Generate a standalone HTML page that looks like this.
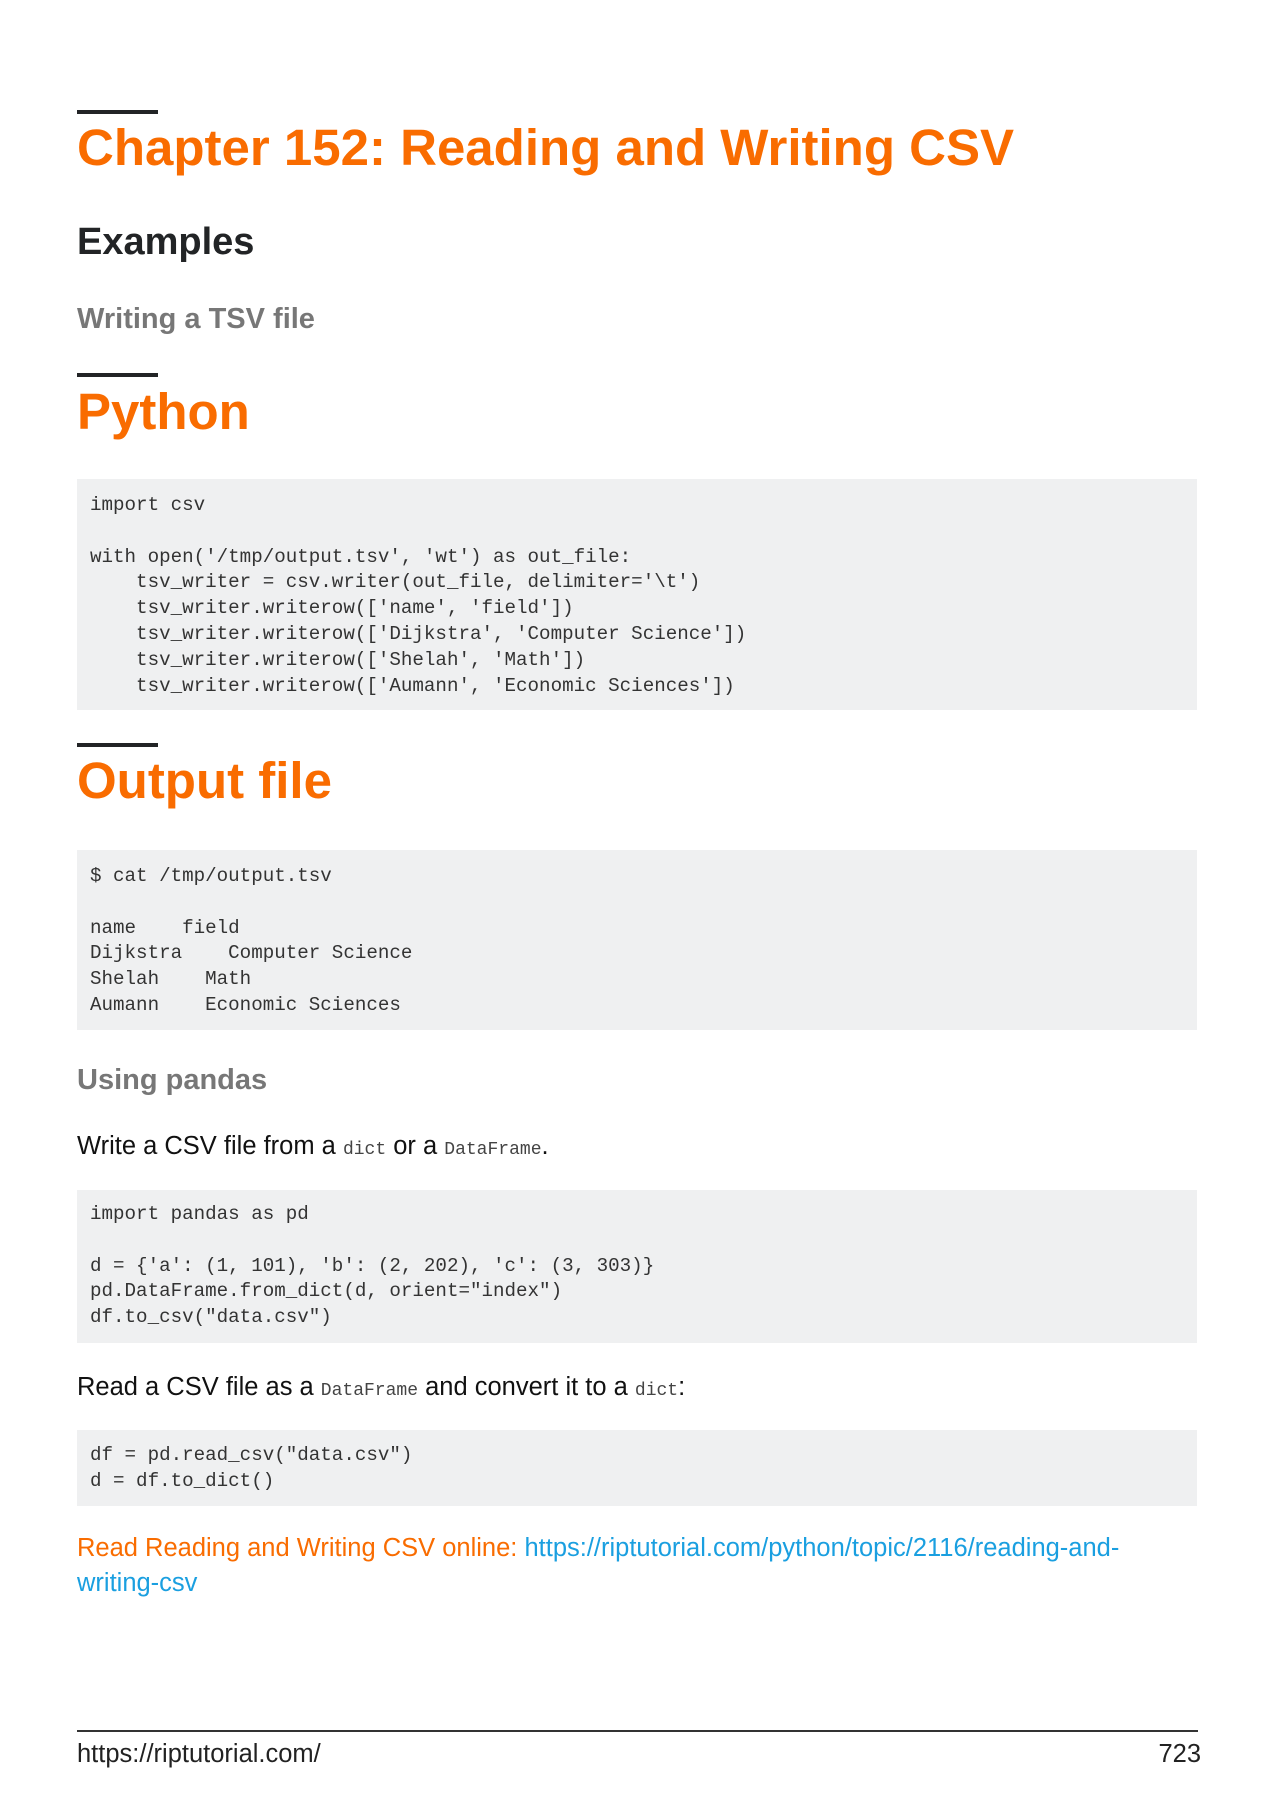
<!DOCTYPE html>
<html><head><meta charset="utf-8"><style>
*{margin:0;padding:0}
body{width:1272px;height:1800px;background:#fff;position:relative;font-family:"Liberation Sans",Arial,sans-serif;overflow:hidden}
.a{position:absolute;white-space:pre}
.bar{position:absolute;left:77px;width:81px;height:4px;background:#222426}
.h1{left:77px;color:#f96c00;font-weight:bold;font-size:51px;line-height:58px}
.h2{left:77px;color:#222426;font-weight:bold;font-size:38px;line-height:44px}
.h3{left:77px;color:#777;font-weight:bold;font-size:29px;line-height:34px}
.code{position:absolute;left:77px;width:1120px;background:#eff0f1}
.c{position:absolute;left:90px;font-family:"Liberation Mono",monospace;font-size:19.2px;color:#333;line-height:25.8px;white-space:pre}
.p{left:77px;font-size:25.5px;line-height:30px;color:#111}
.p code{font-family:"Liberation Mono",monospace;font-size:18px;color:#444}
</style></head><body>
<div class="bar" style="top:110px"></div>
<div class="a h1" style="top:119px">Chapter 152: Reading and Writing CSV</div>
<div class="a h2" style="top:220px">Examples</div>
<div class="a h3" style="top:302px">Writing a TSV file</div>
<div class="bar" style="top:373px"></div>
<div class="a h1" style="top:383px">Python</div>
<div class="code" style="top:479px;height:231px"></div>
<div class="c" style="top:493px">import csv

with open('/tmp/output.tsv', 'wt') as out_file:
    tsv_writer = csv.writer(out_file, delimiter='\t')
    tsv_writer.writerow(['name', 'field'])
    tsv_writer.writerow(['Dijkstra', 'Computer Science'])
    tsv_writer.writerow(['Shelah', 'Math'])
    tsv_writer.writerow(['Aumann', 'Economic Sciences'])</div>
<div class="bar" style="top:743px"></div>
<div class="a h1" style="top:752px">Output file</div>
<div class="code" style="top:850px;height:180px"></div>
<div class="c" style="top:864px">$ cat /tmp/output.tsv

name    field
Dijkstra    Computer Science
Shelah    Math
Aumann    Economic Sciences</div>
<div class="a h3" style="top:1063px">Using pandas</div>
<div class="a p" style="top:1131px">Write a CSV file from a <code>dict</code> or a <code>DataFrame</code>.</div>
<div class="code" style="top:1190px;height:153px"></div>
<div class="c" style="top:1202px">import pandas as pd

d = {'a': (1, 101), 'b': (2, 202), 'c': (3, 303)}
pd.DataFrame.from_dict(d, orient="index")
df.to_csv("data.csv")</div>
<div class="a p" style="top:1372px">Read a CSV file as a <code>DataFrame</code> and convert it to a <code>dict</code>:</div>
<div class="code" style="top:1430px;height:76px"></div>
<div class="c" style="top:1443px">df = pd.read_csv("data.csv")
d = df.to_dict()</div>
<div class="a p" style="top:1533px;color:#f96c00">Read Reading and Writing CSV online: <span style="color:#1a9fe0">https://riptutorial.com/python/topic/2116/reading-and-</span></div>
<div class="a p" style="top:1568px;color:#1a9fe0">writing-csv</div>
<div style="position:absolute;left:77px;top:1730px;width:1121px;height:2px;background:#333"></div>
<div class="a p" style="top:1739px;color:#222">https://riptutorial.com/</div>
<div class="a p" style="top:1739px;left:auto;right:71px;color:#222">723</div>
</body></html>
